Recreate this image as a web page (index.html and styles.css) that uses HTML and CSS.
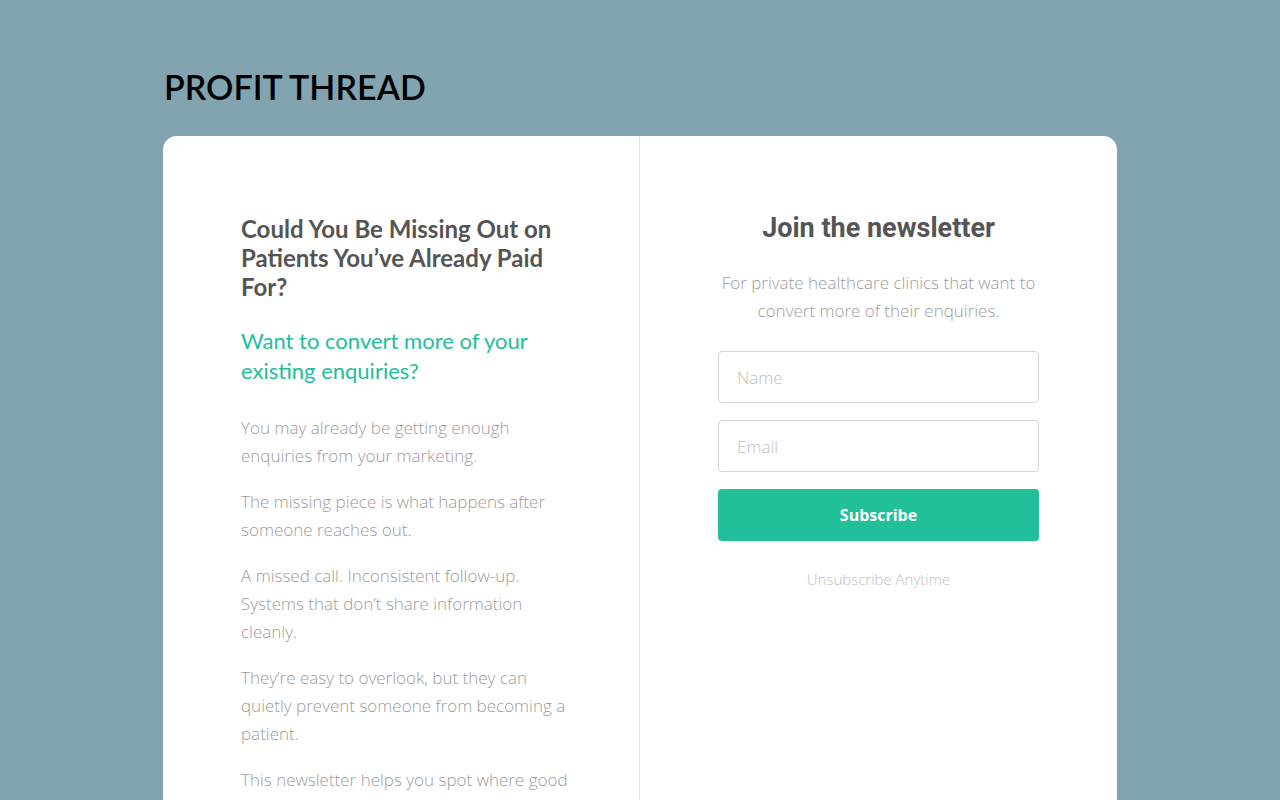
FILE: index.html
```html
<!DOCTYPE html>
<html lang="en">
<head>
<meta charset="utf-8">
<meta name="viewport" content="width=device-width, initial-scale=1">
<title>Profit Thread</title>
<link rel="stylesheet" href="styles.css">
</head>
<body class="page">
<div class="wrap">
  <header class="logo">PROFIT THREAD</header>
  <main class="card">
    <section class="intro">
      <h1 class="title">Could You Be Missing Out on Patients You’ve Already Paid For?</h1>
      <h2 class="subtitle">Want to convert more of your existing enquiries?</h2>
      <div class="copy">
        <p>You may already be getting enough enquiries from your marketing.</p>
        <p>The missing piece is what happens after someone reaches out.</p>
        <p>A missed call. Inconsistent follow-up. Systems that don’t share information cleanly.</p>
        <p>They’re easy to overlook, but they can quietly prevent someone from becoming a patient.</p>
        <p>This newsletter helps you spot where good</p>
      </div>
    </section>
    <section class="signup">
      <h2 class="join">Join the newsletter</h2>
      <p class="lead">For private healthcare clinics that want to convert more of their enquiries.</p>
      <form class="form">
        <input class="field" type="text" name="name" placeholder="Name" aria-label="Name">
        <input class="field" type="email" name="email" placeholder="Email" aria-label="Email">
        <button class="submit" type="submit">Subscribe</button>
      </form>
      <p class="note">Unsubscribe Anytime</p>
    </section>
  </main>
</div>
</body>
</html>
```
FILE: styles.css
```css
* { box-sizing: border-box; }
h1, h2, p { margin: 0; }
.page {
  margin: 0;
  background: #82a4b0;
  color: #9c9c9c;
  font: 300 17px/28px "Open Sans", sans-serif;
}
.wrap { max-width: 954px; margin: 0 auto; padding-top: 64px; }
.logo {
  margin-bottom: 26px;
  padding-left: 1px;
  color: #000;
  font: 600 34px/46px Lato, sans-serif;
}
.card {
  display: grid;
  grid-template-columns: 1fr 1fr;
  background: #fff;
  border-radius: 14px 14px 0 0;
}
.intro, .signup { padding: 78px; }
.intro { padding-right: 64px; border-right: 1px solid #e3e3e3; }
.title { color: #555; font: 700 24px/29px Lato, sans-serif; margin-bottom: 25px; }
.subtitle { color: #21c09a; font: 400 22px/30px Lato, sans-serif; margin-bottom: 28px; }
.copy { display: flex; flex-direction: column; gap: 18px; }
.signup { padding-top: 75px; text-align: center; }
.join { color: #555; font: 700 27px/34px Roboto, sans-serif; margin-bottom: 24px; }
.lead { margin-bottom: 26px; }
.form { display: flex; flex-direction: column; gap: 17px; }
.field, .submit { width: 100%; height: 52px; border-radius: 4px; font-family: inherit; }
.field {
  padding: 0 18px;
  border: 1px solid #d5d5d5;
  background: #fff;
  color: #555;
  font-size: 17px;
  font-weight: 300;
}
.field::placeholder { color: #c0c0c0; opacity: 1; }
.submit { border: 0; background: #21c09a; color: #fff; font-size: 16px; font-weight: 700; cursor: pointer; }
.note { margin-top: 24px; color: #c0c0c0; font-size: 15px; }
```
